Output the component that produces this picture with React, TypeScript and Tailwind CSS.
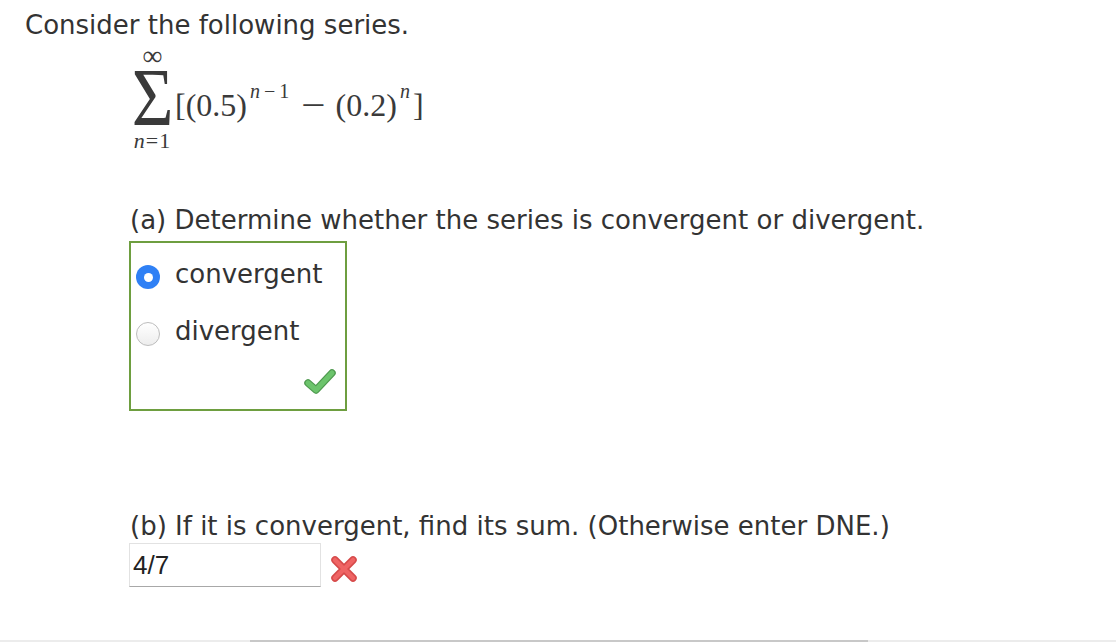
import React from "react";

const sans = { fontFamily: '"DejaVu Sans", Verdana, sans-serif' };

function Check() {
  return (
    <svg width="32" height="27" viewBox="0 0 32 27">
      <path d="M4 15 L12 22 L28 5" fill="none" stroke="#4f9a4f" strokeWidth="7.5" strokeLinecap="round" strokeLinejoin="round" />
      <path d="M4 15 L12 22 L28 5" fill="none" stroke="#6cc46c" strokeWidth="5" strokeLinecap="round" strokeLinejoin="round" />
    </svg>
  );
}

function Cross() {
  return (
    <svg width="28" height="28" viewBox="0 0 28 28">
      <path d="M5 5 L23 23 M23 5 L5 23" stroke="#d64a4a" strokeWidth="7.5" strokeLinecap="round" />
      <path d="M5 5 L23 23 M23 5 L5 23" stroke="#ef6464" strokeWidth="4.5" strokeLinecap="round" />
    </svg>
  );
}

export default function App() {
  return (
    <div className="w-[1116px] h-[642px] bg-white flex flex-col text-[#333]" style={sans}>
      <div className="flex-1 flex flex-col">
        <p className="pl-[25px] pt-[10px] text-[26px] leading-[30px]">Consider the following series.</p>

        <div className="ml-[130px] mt-[10px] h-[100px] flex items-start font-['Liberation_Serif',serif] text-[#3a3a3a]">
          <div className="flex flex-col items-center w-[45px]">
            <span className="text-[28px] leading-[14px] h-[14px] -mt-[1px]">∞</span>
            <div className="mt-[6px] h-[57px] w-[45px] flex items-center justify-center overflow-visible">
              <span className="inline-block text-[64px] leading-none scale-x-[1.12] scale-y-[1.3]">Σ</span>
            </div>
            <span className="text-[22px] leading-[22px] mt-[4px] tracking-[1px]">
              <span className="italic">n</span>=1
            </span>
          </div>
          <div className="flex items-start text-[32px] leading-[36px] mt-[37px]">
            <span>[(0.5)</span>
            <span className="text-[20px] leading-[18px] -mt-[5px] ml-[3px]">
              <i>n</i>
              <span className="mx-[4px]">−</span>1
            </span>
            <span className="ml-[14px] text-[36px] leading-[36px] inline-block scale-x-[1.2]">−</span>
            <span className="ml-[12px]">(0.2)</span>
            <span className="text-[20px] leading-[18px] -mt-[5px] ml-[3px]">
              <i>n</i>
            </span>
            <span className="ml-[3px]">]</span>
          </div>
        </div>

        <div className="pl-[129px] mt-[55px]">
          <p className="text-[26px] leading-[30px] pl-[1px]">(a) Determine whether the series is convergent or divergent.</p>
          <div className="mt-[6px] w-[218px] h-[170px] border-2 border-[#6e9e40] flex flex-col">
            <div className="flex items-start gap-[15px] pl-[5px] mt-[16px]">
              <span className="mt-[6px] w-[24px] h-[24px] rounded-full bg-[#2f80f5] flex items-center justify-center">
                <span className="w-[9px] h-[9px] rounded-full bg-white" />
              </span>
              <span className="text-[26px] leading-[30px]">convergent</span>
            </div>
            <div className="flex items-start gap-[15px] pl-[5px] mt-[27px]">
              <span className="mt-[6px] w-[24px] h-[24px] rounded-full border border-[#bdbdbd] bg-gradient-to-b from-white to-[#ededed]" />
              <span className="text-[26px] leading-[30px]">divergent</span>
            </div>
            <div className="flex justify-end pr-[9px] mt-[22px]">
              <Check />
            </div>
          </div>

          <p className="text-[26px] leading-[30px] mt-[100px] pl-[1px]">(b) If it is convergent, find its sum. (Otherwise enter DNE.)</p>
          <div className="flex items-start mt-[2px]">
            <div className="w-[192px] h-[44px] border border-[#e2e2e2] border-b-[#a8a8a8] flex items-center pl-[3px] text-[26px] text-[#222] font-['Liberation_Sans',Arial,sans-serif]">
              4/7
            </div>
            <span className="ml-[9px] mt-[12px]">
              <Cross />
            </span>
          </div>
        </div>
      </div>
      <div className="h-[2px] bg-[#ececec] flex">
        <div className="w-[250px]" />
        <div className="w-[618px] bg-[#c8c8c8]" />
      </div>
    </div>
  );
}
